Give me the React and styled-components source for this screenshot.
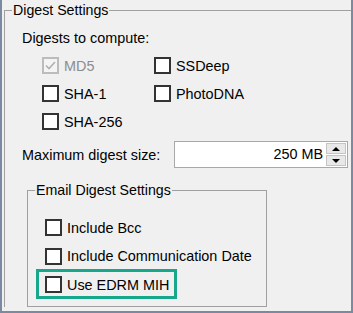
import React from 'react';
import styled, { createGlobalStyle } from 'styled-components';

const Global = createGlobalStyle`
  html, body { margin: 0; padding: 0; background: #f0f0f0; }
  body { font-family: "Liberation Sans", Arial, sans-serif; font-size: 14.4px; color: #000; }
  * { box-sizing: border-box; }
`;

const Frame = styled.div`
  width: 353px;
  height: 313px;
  background: #f0f0f0;
  border-left: 2px solid #7a8aa0;
  border-right: 2px solid #7a8aa0;
  border-bottom: 2px solid #7a8aa0;
  padding: 2px 0 0 2px;
  overflow: hidden;
`;

const Group = styled.fieldset`
  margin: 0;
  padding: 0;
  min-width: 0;
  border-style: solid;
  border-color: #a0a0a0;
  border-width: ${p => (p.$open ? '1px 0 0 1px' : '1px')};
  width: ${p => p.$width || 'auto'};
  height: ${p => p.$height || 'auto'};
  margin-left: ${p => p.$left || '0'};
  margin-top: ${p => p.$top || '0'};
`;

const Legend = styled.legend`
  margin-left: 7px;
  padding: 0 1px;
  line-height: 16px;
  font-size: 14.2px;
`;

const Body = styled.div`
  padding: ${p => p.$pad};
  display: flex;
  flex-direction: column;
  align-items: flex-start;
`;

const Caption = styled.div`
  line-height: 16px;
`;

const Grid = styled.div`
  display: grid;
  grid-template-columns: 112px auto;
  row-gap: 11px;
  margin: 11px 0 0 20px;
`;

const Stack = styled.div`
  display: flex;
  flex-direction: column;
  gap: 11.5px;
`;

const Option = styled.label`
  display: flex;
  align-items: center;
  gap: 5px;
  height: 17px;
  line-height: 16px;
  white-space: nowrap;
  color: ${p => (p.$disabled ? '#8d8d8d' : '#000')};
`;

const Box = styled.span`
  width: 17px;
  height: 17px;
  flex: none;
  border: 2px solid ${p => (p.$disabled ? '#bcbcbc' : '#333333')};
  background: ${p => (p.$disabled ? '#f4f4f4' : '#ffffff')};
  display: flex;
  align-items: center;
  justify-content: center;
`;

const Highlight = styled.div`
  width: 141px;
  height: 30px;
  border: 3px solid #17a88b;
  margin: -7px 0 -6px -9px;
  padding: 4px 0 0 6px;
`;

const SizeRow = styled.div`
  display: flex;
  align-items: center;
  margin-top: 11px;
`;

const SizeLabel = styled.div`
  width: 152px;
  line-height: 16px;
`;

const Spin = styled.div`
  width: 174px;
  height: 27px;
  border: 1px solid #a8a8a8;
  background: #fff;
  display: flex;
`;

const Value = styled.div`
  flex: 1;
  text-align: right;
  line-height: 25px;
  padding-right: 3px;
`;

const Buttons = styled.div`
  width: 21px;
  display: flex;
  flex-direction: column;
  padding: 1px 1px 1px 0;
  gap: 1px;
`;

const Btn = styled.div`
  flex: 1;
  background: #e8e8e8;
  border: 1px solid #c4c4c4;
  display: flex;
  align-items: center;
  justify-content: center;
`;

const Tri = styled.span`
  width: 0;
  height: 0;
  border-left: 4px solid transparent;
  border-right: 4px solid transparent;
  ${p => (p.$up ? 'border-bottom: 4px solid #000;' : 'border-top: 4px solid #000;')}
`;

const Check = ({ label, checked, disabled }) => (
  <Option $disabled={disabled}>
    <Box $disabled={disabled}>
      {checked && (
        <svg width="11" height="9" viewBox="0 0 11 9">
          <path d="M1 4.5 L4 7.5 L10 1" fill="none" stroke={disabled ? '#b0b0b0' : '#333'} strokeWidth="1.6" />
        </svg>
      )}
    </Box>
    {label}
  </Option>
);

export default function App() {
  return (
    <>
      <Global />
      <Frame>
        <Group $open>
          <Legend>Digest Settings</Legend>
          <Body $pad="12px 0 0 17px">
            <Caption>Digests to compute:</Caption>
            <Grid>
              <Check label="MD5" checked disabled />
              <Check label="SSDeep" />
              <Check label="SHA-1" />
              <Check label="PhotoDNA" />
              <Check label="SHA-256" />
            </Grid>
            <SizeRow>
              <SizeLabel>Maximum digest size:</SizeLabel>
              <Spin>
                <Value>250 MB</Value>
                <Buttons>
                  <Btn><Tri $up /></Btn>
                  <Btn><Tri /></Btn>
                </Buttons>
              </Spin>
            </SizeRow>
            <Group $width="240px" $height="125px" $left="5px" $top="14px">
              <Legend>Email Digest Settings</Legend>
              <Body $pad="21px 0 0 17px">
                <Stack>
                  <Check label="Include Bcc" />
                  <Check label="Include Communication Date" />
                  <Highlight>
                    <Check label="Use EDRM MIH" />
                  </Highlight>
                </Stack>
              </Body>
            </Group>
          </Body>
        </Group>
      </Frame>
    </>
  );
}
